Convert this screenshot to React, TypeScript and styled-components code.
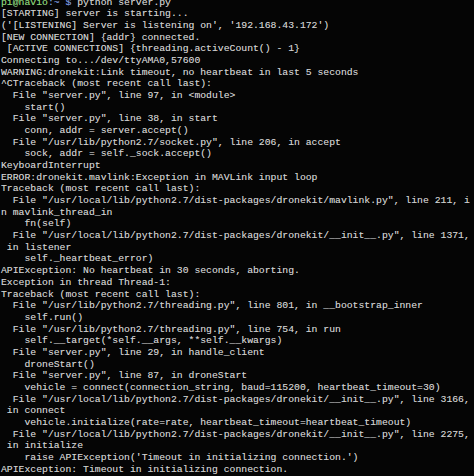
import React from "react";
import styled, { createGlobalStyle } from "styled-components";

const Global = createGlobalStyle`
  html, body {
    margin: 0;
    padding: 0;
    background: #050505;
    overflow: hidden;
  }
`;

const Terminal = styled.div`
  width: 474px;
  height: 476px;
  background: #050505;
  overflow: hidden;
  box-sizing: border-box;
  padding-left: 1px;
`;

const Screen = styled.pre`
  margin: -3.3px 0 0 0;
  font-family: "Liberation Mono", "DejaVu Sans Mono", monospace;
  font-size: 9.77px;
  line-height: 11.67px;
  color: #cdcdcd;
  white-space: pre;
  text-shadow: 0 0 0.6px rgba(220, 220, 220, 0.5);
`;

const Seg = styled.span<{ $tone?: "user" | "path" }>`
  color: ${(p) =>
    p.$tone === "user" ? "#7fd46a" : p.$tone === "path" ? "#6d8fe0" : "inherit"};
`;

const lines: string[] = [
  `[STARTING] server is starting...`,
  `('[LISTENING] Server is listening on', '192.168.43.172')`,
  `[NEW CONNECTION] {addr} connected.`,
  ` [ACTIVE CONNECTIONS] {threading.activeCount() - 1}`,
  `Connecting to.../dev/ttyAMA0,57600`,
  `WARNING:dronekit:Link timeout, no heartbeat in last 5 seconds`,
  `^CTraceback (most recent call last):`,
  `  File "server.py", line 97, in <module>`,
  `    start()`,
  `  File "server.py", line 38, in start`,
  `    conn, addr = server.accept()`,
  `  File "/usr/lib/python2.7/socket.py", line 206, in accept`,
  `    sock, addr = self._sock.accept()`,
  `KeyboardInterrupt`,
  `ERROR:dronekit.mavlink:Exception in MAVLink input loop`,
  `Traceback (most recent call last):`,
  `  File "/usr/local/lib/python2.7/dist-packages/dronekit/mavlink.py", line 211, i`,
  `n mavlink_thread_in`,
  `    fn(self)`,
  `  File "/usr/local/lib/python2.7/dist-packages/dronekit/__init__.py", line 1371,`,
  ` in listener`,
  `    self._heartbeat_error)`,
  `APIException: No heartbeat in 30 seconds, aborting.`,
  `Exception in thread Thread-1:`,
  `Traceback (most recent call last):`,
  `  File "/usr/lib/python2.7/threading.py", line 801, in __bootstrap_inner`,
  `    self.run()`,
  `  File "/usr/lib/python2.7/threading.py", line 754, in run`,
  `    self.__target(*self.__args, **self.__kwargs)`,
  `  File "server.py", line 29, in handle_client`,
  `    droneStart()`,
  `  File "server.py", line 87, in droneStart`,
  `    vehicle = connect(connection_string, baud=115200, heartbeat_timeout=30)`,
  `  File "/usr/local/lib/python2.7/dist-packages/dronekit/__init__.py", line 3166,`,
  ` in connect`,
  `    vehicle.initialize(rate=rate, heartbeat_timeout=heartbeat_timeout)`,
  `  File "/usr/local/lib/python2.7/dist-packages/dronekit/__init__.py", line 2275,`,
  ` in initialize`,
  `    raise APIException('Timeout in initializing connection.')`,
  `APIException: Timeout in initializing connection.`,
];

export default function App() {
  return (
    <>
      <Global />
      <Terminal>
        <Screen>
          <Seg $tone="user">pi@navio</Seg>
          <Seg $tone="path">:~ $</Seg>
          {" python server.py\n"}
          {lines.join("\n")}
        </Screen>
      </Terminal>
    </>
  );
}
